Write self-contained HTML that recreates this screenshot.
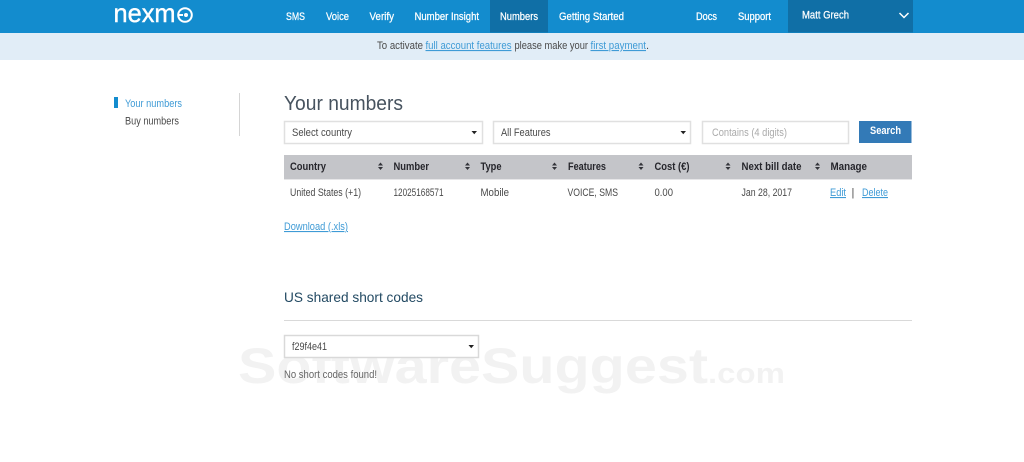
<!DOCTYPE html>
<html lang="en"><head><meta charset="utf-8"><title>Your numbers - Nexmo</title>
<style>
html,body{margin:0;padding:0;background:#fff;width:1024px;height:462px;overflow:hidden}
svg{display:block;filter:blur(.3px)}
text{font-family:"Liberation Sans",sans-serif;font-size:11px;fill:#4a4a4a}
.n text{fill:#fff;font-size:11px;stroke:#fff;stroke-width:.25}
.h text{fill:#26262c;font-weight:bold;font-size:11px}
.l{fill:#3f9bd6;text-decoration:underline}
</style></head><body>
<svg width="1024" height="462" viewBox="0 0 1024 462" xmlns="http://www.w3.org/2000/svg">
<rect width="1024" height="33" fill="#138cce"/>
<rect y="33" width="1024" height="27" fill="#e1edf7"/>
<rect x="490" width="58" height="32.5" fill="#106fa6"/>
<rect x="788" width="125" height="32.5" fill="#106fa6"/>

<!-- logo -->
<text x="113.500" y="21.800" textLength="62" lengthAdjust="spacingAndGlyphs" style="font-size:26px;fill:#fff;stroke:#fff;stroke-width:.4">nexm</text>
<circle cx="185" cy="15" r="6.800" fill="none" stroke="#fff" stroke-width="2"/>
<rect x="178" y="14" width="5" height="2" fill="#fff"/>
<circle cx="186" cy="15" r="2" fill="#fff"/>

<!-- nav -->
<g class="n">
<text x="286" y="20" textLength="19" lengthAdjust="spacingAndGlyphs">SMS</text>
<text x="326" y="20" textLength="23" lengthAdjust="spacingAndGlyphs">Voice</text>
<text x="369.500" y="20" textLength="24.500" lengthAdjust="spacingAndGlyphs">Verify</text>
<text x="414.500" y="20" textLength="64.500" lengthAdjust="spacingAndGlyphs">Number Insight</text>
<text x="500" y="20" textLength="38" lengthAdjust="spacingAndGlyphs">Numbers</text>
<text x="559" y="20" textLength="65" lengthAdjust="spacingAndGlyphs">Getting Started</text>
<text x="696" y="20" textLength="21" lengthAdjust="spacingAndGlyphs">Docs</text>
<text x="738" y="20" textLength="33" lengthAdjust="spacingAndGlyphs">Support</text>
<text x="802" y="18.500" textLength="47" lengthAdjust="spacingAndGlyphs">Matt Grech</text>
</g>
<path d="M899.500 13 L904 17.500 L908.500 13" fill="none" stroke="#fff" stroke-width="1.500"/>

<!-- banner -->
<text x="377" y="49" textLength="46" lengthAdjust="spacingAndGlyphs">To activate</text>
<text x="425.500" y="49" textLength="86" lengthAdjust="spacingAndGlyphs" class="l">full account features</text>
<text x="514.500" y="49" textLength="73.500" lengthAdjust="spacingAndGlyphs">please make your</text>
<text x="590.500" y="49" textLength="55.500" lengthAdjust="spacingAndGlyphs" class="l">first payment</text>
<text x="646" y="49">.</text>

<!-- watermark -->
<text x="238" y="383" textLength="470" lengthAdjust="spacingAndGlyphs" style="font-size:50px;font-weight:bold;fill:#000;opacity:.05">SoftwareSuggest</text>
<text x="708" y="383" textLength="77" lengthAdjust="spacingAndGlyphs" style="font-size:29px;font-weight:bold;fill:#000;opacity:.05">.com</text>

<!-- sidebar -->
<rect x="114" y="97" width="4" height="11" fill="#138cce"/>
<text x="125" y="107" textLength="57" lengthAdjust="spacingAndGlyphs" style="fill:#3f9bd6">Your numbers</text>
<text x="125" y="124.500" textLength="54" lengthAdjust="spacingAndGlyphs">Buy numbers</text>
<rect x="239" y="93" width="1" height="43" fill="#d5d5d5"/>

<!-- title -->
<text x="284" y="110" textLength="119" lengthAdjust="spacingAndGlyphs" style="font-size:20px;fill:#47535f">Your numbers</text>

<!-- filters -->
<rect x="284.500" y="121.500" width="198" height="22" fill="#fff" stroke="#e0e0e0" stroke-width="1.500"/>
<text x="292" y="136" textLength="60" lengthAdjust="spacingAndGlyphs">Select country</text>
<path d="M471.500 131 h5.500 l-2.750 3.200z" fill="#222"/>
<rect x="493.500" y="121.500" width="197" height="22" fill="#fff" stroke="#e0e0e0" stroke-width="1.500"/>
<text x="501" y="136" textLength="49.500" lengthAdjust="spacingAndGlyphs">All Features</text>
<path d="M680.500 131 h5.500 l-2.750 3.200z" fill="#222"/>
<rect x="702.500" y="121.500" width="146" height="22" fill="#fff" stroke="#e0e0e0" stroke-width="1.500"/>
<text x="712" y="136" textLength="75" lengthAdjust="spacingAndGlyphs" style="fill:#aaa">Contains (4 digits)</text>
<rect x="859" y="121" width="52.500" height="22" fill="#337ab7"/>
<text x="870" y="134" textLength="31" lengthAdjust="spacingAndGlyphs" style="fill:#fff;font-weight:bold">Search</text>

<!-- table -->
<rect x="284" y="155" width="628" height="24" fill="#c4c5c9"/>
<rect x="284" y="179" width="628" height="1" fill="#e6e6e8"/>
<g class="h">
<text x="290" y="170" textLength="36" lengthAdjust="spacingAndGlyphs">Country</text>
<text x="393.500" y="170" textLength="35.500" lengthAdjust="spacingAndGlyphs">Number</text>
<text x="480.500" y="170" textLength="21" lengthAdjust="spacingAndGlyphs">Type</text>
<text x="568" y="170" textLength="38" lengthAdjust="spacingAndGlyphs">Features</text>
<text x="654.500" y="170" textLength="35" lengthAdjust="spacingAndGlyphs">Cost (€)</text>
<text x="741.500" y="170" textLength="60" lengthAdjust="spacingAndGlyphs">Next bill date</text>
<text x="830.500" y="170" textLength="36.500" lengthAdjust="spacingAndGlyphs">Manage</text>
</g>
<g fill="#33343a">
<path d="M378 165.500 h5 l-2.500 -3z M378 167 h5 l-2.500 3z"/>
<path d="M465 165.500 h5 l-2.500 -3z M465 167 h5 l-2.500 3z"/>
<path d="M552 165.500 h5 l-2.500 -3z M552 167 h5 l-2.500 3z"/>
<path d="M638.500 165.500 h5 l-2.500 -3z M638.500 167 h5 l-2.500 3z"/>
<path d="M725.500 165.500 h5 l-2.500 -3z M725.500 167 h5 l-2.500 3z"/>
<path d="M815 165.500 h5 l-2.500 -3z M815 167 h5 l-2.500 3z"/>
</g>
<text x="290" y="196" textLength="71" lengthAdjust="spacingAndGlyphs">United States (+1)</text>
<text x="393.500" y="196" textLength="50" lengthAdjust="spacingAndGlyphs">12025168571</text>
<text x="480.500" y="196" textLength="28.500" lengthAdjust="spacingAndGlyphs">Mobile</text>
<text x="567.500" y="196" textLength="50.500" lengthAdjust="spacingAndGlyphs">VOICE, SMS</text>
<text x="654.500" y="196" textLength="18.500" lengthAdjust="spacingAndGlyphs">0.00</text>
<text x="741.500" y="196" textLength="50.500" lengthAdjust="spacingAndGlyphs">Jan 28, 2017</text>
<text x="830" y="196" textLength="16" lengthAdjust="spacingAndGlyphs" class="l">Edit</text>
<text x="851.500" y="196">|</text>
<text x="862" y="196" textLength="26" lengthAdjust="spacingAndGlyphs" class="l">Delete</text>

<text x="284" y="230" textLength="64" lengthAdjust="spacingAndGlyphs" class="l">Download (.xls)</text>

<!-- short codes -->
<text x="284" y="302" textLength="139" lengthAdjust="spacingAndGlyphs" style="font-size:14px;fill:#234a63">US shared short codes</text>
<rect x="284" y="320" width="628" height="1" fill="#d9d9d9"/>
<rect x="284.500" y="335.500" width="194" height="22" fill="#fff" stroke="#d9d9d9" stroke-width="1.500"/>
<text x="292" y="350" textLength="35" lengthAdjust="spacingAndGlyphs">f29f4e41</text>
<path d="M468.500 345 h5.500 l-2.750 3.200z" fill="#222"/>
<text x="284" y="378" textLength="93" lengthAdjust="spacingAndGlyphs" style="fill:#666">No short codes found!</text>
</svg>
</body></html>
